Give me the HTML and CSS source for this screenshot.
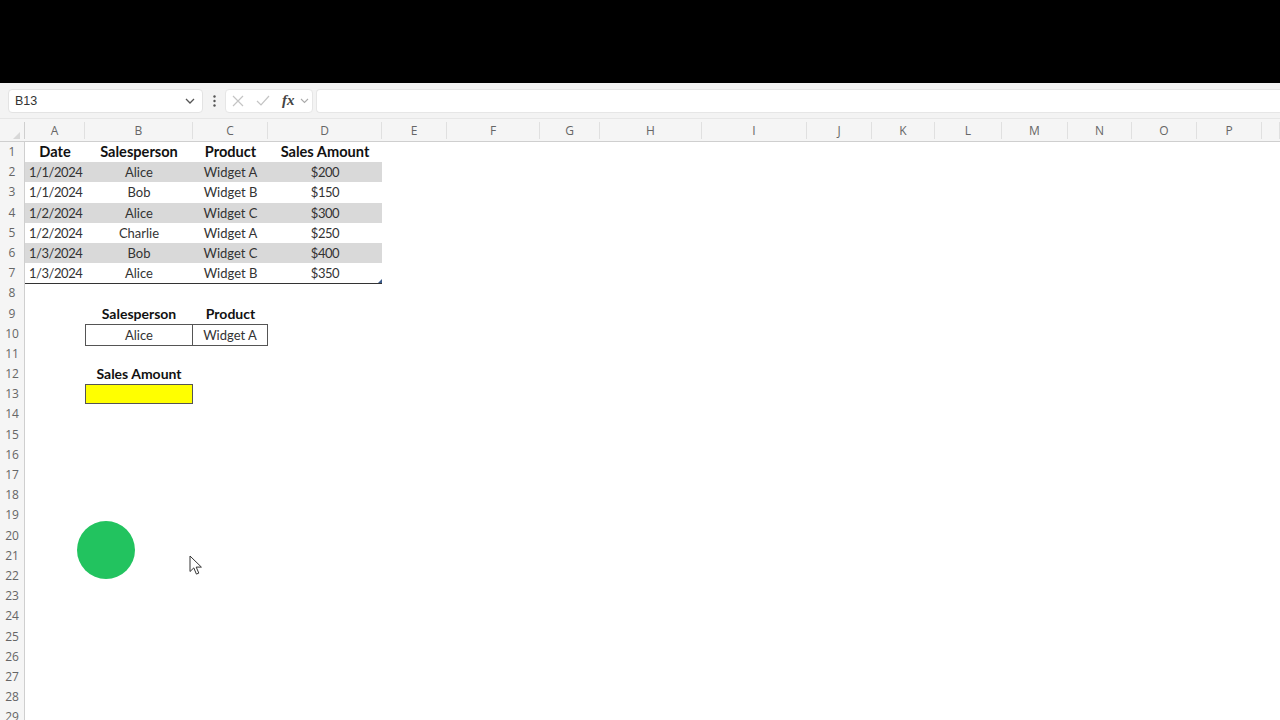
FILE: index.html
```html
<!DOCTYPE html>
<html lang="en">
<head>
    <meta charset="UTF-8">
    <title>Sales sheet</title>
    <link rel="stylesheet" href="styles.css">
</head>
<body>
<div class="topband"></div>

<div class="formulabar">
    <div class="namebox">
        <span>B13</span>
        <svg class="chev" width="10" height="6" viewBox="0 0 10 6"><path d="M1 1l4 4 4-4" fill="none" stroke="#555" stroke-width="1.3"/></svg>
    </div>
    <div class="dots">
        <svg width="3" height="12" viewBox="0 0 3 12"><circle cx="1.5" cy="1.5" r="1.2" fill="#555"/><circle cx="1.5" cy="6" r="1.2" fill="#555"/><circle cx="1.5" cy="10.5" r="1.2" fill="#555"/></svg>
    </div>
    <div class="fxbox">
        <svg width="12" height="12" viewBox="0 0 12 12"><path d="M1 1l10 10M11 1L1 11" stroke="#c4c4c4" stroke-width="1.2"/></svg>
        <svg width="14" height="11" viewBox="0 0 14 11"><path d="M1 6l4 4 8-9" fill="none" stroke="#c4c4c4" stroke-width="1.2"/></svg>
        <span class="fx">fx</span>
        <svg width="9" height="6" viewBox="0 0 9 6"><path d="M1 1l3.5 3.5L8 1" fill="none" stroke="#aaa" stroke-width="1.1"/></svg>
    </div>
    <div class="forminput"></div>
</div>

<div class="sheet">
    <div class="row colhead">
        <div class="corner"><span class="tri"></span></div>
        <div>A</div><div>B</div><div>C</div><div>D</div><div>E</div><div>F</div><div>G</div><div>H</div>
        <div>I</div><div>J</div><div>K</div><div>L</div><div>M</div><div>N</div><div>O</div><div>P</div><div></div>
    </div>

    <div class="row">
        <div class="rn">1</div>
        <div class="c th">Date</div><div class="c th">Salesperson</div><div class="c th">Product</div><div class="c th">Sales Amount</div>
    </div>
    <div class="row">
        <div class="rn">2</div>
        <div class="c td band left num">1/1/2024</div><div class="c td band">Alice</div><div class="c td band">Widget A</div><div class="c td band num">$200</div>
    </div>
    <div class="row">
        <div class="rn">3</div>
        <div class="c td left num">1/1/2024</div><div class="c td">Bob</div><div class="c td">Widget B</div><div class="c td num">$150</div>
    </div>
    <div class="row">
        <div class="rn">4</div>
        <div class="c td band left num">1/2/2024</div><div class="c td band">Alice</div><div class="c td band">Widget C</div><div class="c td band num">$300</div>
    </div>
    <div class="row">
        <div class="rn">5</div>
        <div class="c td left num">1/2/2024</div><div class="c td">Charlie</div><div class="c td">Widget A</div><div class="c td num">$250</div>
    </div>
    <div class="row">
        <div class="rn">6</div>
        <div class="c td band left num">1/3/2024</div><div class="c td band">Bob</div><div class="c td band">Widget C</div><div class="c td band num">$400</div>
    </div>
    <div class="row">
        <div class="rn">7</div>
        <div class="c td last left num">1/3/2024</div><div class="c td last">Alice</div><div class="c td last">Widget B</div><div class="c td last handle num">$350</div>
    </div>
    <div class="row"><div class="rn">8</div></div>
    <div class="row">
        <div class="rn">9</div>
        <div class="c"></div><div class="c th sub">Salesperson</div><div class="c th sub">Product</div>
    </div>
    <div class="row">
        <div class="rn">10</div>
        <div class="c"></div><div class="c td boxed">Alice</div><div class="c td boxed nol">Widget A</div>
    </div>
    <div class="row"><div class="rn">11</div></div>
    <div class="row">
        <div class="rn">12</div>
        <div class="c"></div><div class="c th sub">Sales Amount</div>
    </div>
    <div class="row">
        <div class="rn">13</div>
        <div class="c"></div><div class="c boxed yellow"></div>
    </div>
    <div class="row"><div class="rn">14</div></div>
    <div class="row"><div class="rn">15</div></div>
    <div class="row"><div class="rn">16</div></div>
    <div class="row"><div class="rn">17</div></div>
    <div class="row"><div class="rn">18</div></div>
    <div class="row"><div class="rn">19</div></div>
    <div class="row"><div class="rn">20</div></div>
    <div class="row"><div class="rn">21</div></div>
    <div class="row"><div class="rn">22</div></div>
    <div class="row"><div class="rn">23</div></div>
    <div class="row"><div class="rn">24</div></div>
    <div class="row"><div class="rn">25</div></div>
    <div class="row"><div class="rn">26</div></div>
    <div class="row"><div class="rn">27</div></div>
    <div class="row"><div class="rn">28</div></div>
    <div class="row"><div class="rn">29</div></div>
</div>

<!-- overlay: click marker + mouse pointer -->
<div class="clickdot"></div>
<svg class="pointer" width="14" height="21" viewBox="0 0 14 21">
    <path d="M1 1v15.5l3.8-3.6 2.6 6.2 2.4-1-2.6-6h5.2z" fill="#fff" stroke="#333" stroke-width="1" stroke-linejoin="round"/>
</svg>
</body>
</html>
```

FILE: styles.css
```css
* {
    box-sizing: border-box;
}

body {
    margin: 0;
    width: 1280px;
    height: 720px;
    overflow: hidden;
    background: #fff;
    font-family: Lato, "Noto Sans", sans-serif;
    position: relative;
}

.topband {
    height: 83px;
    background: #000;
}

/* formula bar */
.formulabar {
    height: 36px;
    background: #f3f3f3;
    display: flex;
    align-items: center;
    padding-left: 8px;
    border-bottom: 1px solid #e6e6e6;
}

.namebox {
    width: 195px;
    height: 24px;
    background: #fff;
    border: 1px solid #e3e3e3;
    border-radius: 4px;
    display: flex;
    align-items: center;
    justify-content: space-between;
    padding: 0 7px 0 6px;
    font-family: "Liberation Sans", sans-serif;
    font-size: 12.5px;
    color: #333;
}

.dots {
    width: 22px;
    display: flex;
    justify-content: center;
}

.fxbox {
    width: 88px;
    height: 24px;
    background: #fff;
    border: 1px solid #e6e6e6;
    border-radius: 4px;
    display: flex;
    align-items: center;
    gap: 12px;
    padding-left: 6px;
}

.fx {
    font-family: "Liberation Serif", serif;
    font-style: italic;
    font-weight: bold;
    font-size: 15px;
    color: #444;
    margin-right: -7px;
}

.forminput {
    flex: 1;
    height: 24px;
    margin-left: 3px;
    background: #fff;
    border: 1px solid #e6e6e6;
    border-right: 0;
    border-radius: 4px 0 0 4px;
}

/* grid */
.row {
    display: grid;
    grid-template-columns: 25px 60px 108px 75px 114px 65px 93px 60px 102px 105px 65px 63px 67px 66px 64px 65px 65px 1fr;
    height: 20.2px;
}

.colhead {
    height: 23px;
    background: #f5f5f5;
    border-bottom: 1px solid #cfcfcf;
}

.colhead > div {
    font-family: "Open Sans", sans-serif;
    font-size: 12px;
    color: #666;
    text-align: center;
    border-right: 1px solid #e0e0e0;
    margin: 3px 0 2px;
    line-height: 17px;
}

.colhead .corner {
    position: relative;
    border-right: 1px solid #cfcfcf;
}

.tri {
    position: absolute;
    left: 13px;
    bottom: 0;
    width: 0;
    height: 0;
    border-left: 7px solid transparent;
    border-bottom: 7px solid #d8d8d8;
}

.rn {
    background: #f5f5f5;
    border-right: 1px solid #cfcfcf;
    font-family: "Open Sans", sans-serif;
    font-size: 12px;
    color: #666;
    line-height: 20px;
    text-align: center;
}

.c {
    font-size: 13px;
    line-height: 20px;
    text-align: center;
    white-space: nowrap;
    color: #333;
}

.num {
    letter-spacing: -0.45px;
}

.th {
    font-size: 14.6px;
    font-weight: bold;
    color: #111;
}

.th.sub {
    font-size: 14px;
}

.row:nth-child(2) .th {
    border-bottom: 1.5px solid #333;
}

.left {
    text-align: left;
    padding-left: 4px;
}

.band {
    background: #d9d9d9;
}

.last {
    border-bottom: 1.5px solid #333;
}

.handle {
    position: relative;
}

.handle::after {
    content: "";
    position: absolute;
    right: 0;
    bottom: 0;
    border-left: 4px solid transparent;
    border-bottom: 4px solid #3b5a8a;
}

.boxed {
    border: 1px solid #555;
}

.nol {
    border-left: 0;
}

.yellow {
    background: #ffff00;
}

/* overlays */
.clickdot {
    position: absolute;
    left: 77px;
    top: 521px;
    width: 58px;
    height: 58px;
    border-radius: 50%;
    background: #22c35f;
}

.pointer {
    position: absolute;
    left: 189px;
    top: 555px;
}
```
